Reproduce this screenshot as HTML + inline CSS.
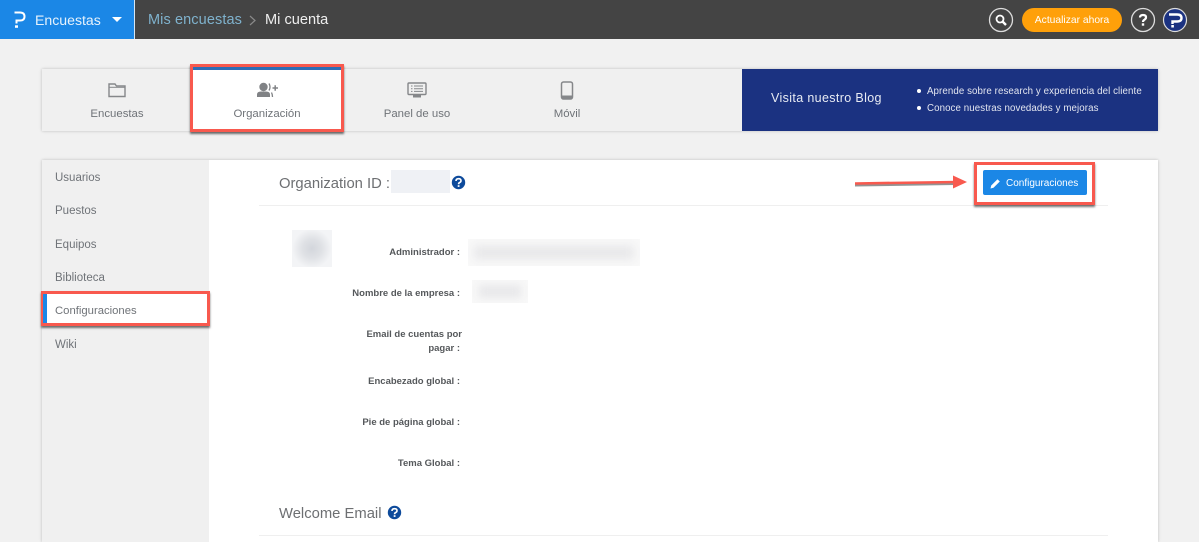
<!DOCTYPE html>
<html lang="es"><head><meta charset="utf-8"><title>Mi cuenta</title>
<style>
html,body{margin:0;padding:0;background:#f1f1f1;width:1199px;height:542px;overflow:hidden}
body{position:relative;font-family:"Liberation Sans",sans-serif}
div,span,svg{position:absolute;display:block;box-sizing:border-box}
.t{white-space:nowrap;line-height:16px}
.tab{color:#6f7378;font-size:11.400px;text-align:center;top:106px}
.side{color:#6f7378;font-size:11.500px;left:55px}
.lab{color:#55585b;font-size:9.500px;font-weight:bold;text-align:right;right:739px;line-height:16px;white-space:nowrap}
.red{border:3px solid #f8594e;box-shadow:0 2px 2px rgba(0,0,0,.55)}
.h{color:#6d6f72;font-size:14.800px}
</style></head><body>
<div style="left:0;top:0;width:1199px;height:39px;background:#444"></div>
<div style="left:0;top:0;width:134px;height:39px;background:#1b87e6"></div>
<div style="left:134px;top:0;width:1px;height:39px;background:#d5e6f5"></div>
<svg style="left:12px;top:10px" width="14" height="20" viewBox="0 0 14 20"><path d="M2.500 2.500H8Q12.500 2.500 12.500 6.500Q12.500 10.500 8 10.500H4.500V13.500" fill="none" stroke="#fff" stroke-width="2"/><rect x="3" y="15.300" width="3" height="2.500" fill="#fff"/></svg>
<div class="t" style="left:35px;top:12px;color:#e6f2fc;font-size:14.100px">Encuestas</div>
<svg style="left:112px;top:17px" width="10" height="6"><path d="M0 0H10L5 5Z" fill="#fff"/></svg>
<div class="t" style="left:148px;top:12px;color:#7fb2cd;font-size:14.500px;letter-spacing:.1px">Mis encuestas</div>
<svg style="left:249px;top:15px" width="8" height="11"><path d="M1 1L6 5.500L1 10" fill="none" stroke="#8a8a8a" stroke-width="1.200"/></svg>
<div class="t" style="left:265px;top:12px;color:#eee;font-size:14.600px">Mi cuenta</div>
<svg style="left:988px;top:7px" width="26" height="26" viewBox="0 0 26 26"><circle cx="13" cy="13" r="11.500" fill="none" stroke="#ddd" stroke-width="1.300"/><circle cx="12" cy="12" r="3.500" fill="none" stroke="#fff" stroke-width="1.800"/><path d="M14.500 14.500L18 18" stroke="#fff" stroke-width="2.400"/></svg>
<div class="t" style="left:1022px;top:8px;width:100px;height:24px;border-radius:12px;background:#ffa00a;color:#fff;font-size:10.300px;text-align:center;line-height:25px">Actualizar ahora</div>
<svg style="left:1130px;top:7px" width="26" height="26" viewBox="0 0 26 26"><circle cx="13" cy="13" r="11.500" fill="none" stroke="#ddd" stroke-width="1.300"/><path d="M10 10.500Q10 8 13 8Q16 8 16 10.300Q16 11.800 14.500 12.700Q13 13.500 13 15" fill="none" stroke="#fff" stroke-width="2.200"/><rect x="11.800" y="16.300" width="2.400" height="2.400" fill="#fff"/></svg>
<svg style="left:1162px;top:7px" width="26" height="26" viewBox="0 0 26 26"><circle cx="13" cy="13" r="11.500" fill="#1b3281" stroke="#ddd" stroke-width="1.200"/><path d="M7 7.500H15Q19.500 7.500 19.500 11Q19.500 14.500 15 14.500H10.500V17" fill="none" stroke="#fff" stroke-width="2.400"/><rect x="9.300" y="18" width="2.600" height="2.500" fill="#fff"/></svg>

<div style="left:42px;top:69px;width:1116px;height:62px;background:#f0f0f0;box-shadow:0 0 3px rgba(0,0,0,.22)"></div>
<div style="left:742px;top:69px;width:416px;height:62px;background:#1b3281"></div>

<svg style="left:108px;top:82px" width="18" height="16" viewBox="0 0 18 16"><path d="M1 14.500V2H7L8.500 4H17V14.500Z" fill="none" stroke="#85878a" stroke-width="1.400"/><path d="M1 5.300H17" stroke="#85878a"/></svg>
<div class="t tab" style="left:67px;width:100px">Encuestas</div>

<div style="left:190px;top:64px;width:154px;height:68px;background:#fff" class="red"></div>
<div style="left:193px;top:67px;width:148px;height:3px;background:#2f6db5"></div>
<svg style="left:256px;top:82px" width="22" height="16" viewBox="0 0 22 16"><circle cx="7.500" cy="5" r="4.200" fill="#808285"/><path d="M1 15V12.500Q1 9.500 5 9.500H10Q14 9.500 14 12.500V15Z" fill="#808285"/><path d="M13 1.500Q15 5 13 8.500M15.500 10.500Q16.500 12.500 16.500 15" stroke="#808285" stroke-width="1.300" fill="none"/><path d="M16.500 6H22M19.200 3.300V8.700" stroke="#808285" stroke-width="1.500"/></svg>
<div class="t tab" style="left:217px;width:100px">Organización</div>

<svg style="left:407px;top:82px" width="20" height="16" viewBox="0 0 20 16"><rect x="1" y="1" width="18" height="11.500" rx="1" fill="#f0f0f0" stroke="#85878a" stroke-width="1.400"/><path d="M4 4H5.500M7 4H16M4 6.700H5.500M7 6.700H16M4 9.400H5.500M7 9.400H16" stroke="#85878a"/><rect x="6" y="13" width="8" height="2.500" fill="#85878a"/></svg>
<div class="t tab" style="left:367px;width:100px">Panel de uso</div>

<svg style="left:560px;top:81px" width="14" height="19" viewBox="0 0 14 19"><rect x="1.500" y="1" width="11" height="17" rx="2" fill="none" stroke="#85878a" stroke-width="1.500"/><rect x="1.500" y="14.500" width="11" height="3.500" fill="#85878a"/></svg>
<div class="t tab" style="left:517px;width:100px">Móvil</div>

<div class="t" style="left:771px;top:90px;color:#e8ebf3;font-size:12.500px;letter-spacing:.36px">Visita nuestro Blog</div>
<div style="left:916.500px;top:89px;width:4px;height:4px;border-radius:50%;background:#fff"></div>
<div class="t" style="left:927px;top:84px;color:#e3e6f0;font-size:9.700px;letter-spacing:.1px">Aprende sobre research y experiencia del cliente</div>
<div style="left:916.500px;top:106px;width:4px;height:4px;border-radius:50%;background:#fff"></div>
<div class="t" style="left:927px;top:101px;color:#e3e6f0;font-size:9.700px;letter-spacing:.1px">Conoce nuestras novedades y mejoras</div>

<div style="left:42px;top:160px;width:1116px;height:382px;background:#fff;box-shadow:0 0 3px rgba(0,0,0,.22)"></div>
<div style="left:42px;top:160px;width:167px;height:382px;background:#f0f0f0"></div>
<div class="t side" style="top:170px">Usuarios</div>
<div class="t side" style="top:203px">Puestos</div>
<div class="t side" style="top:237px">Equipos</div>
<div class="t side" style="top:270px">Biblioteca</div>
<div class="red" style="left:41px;top:291px;width:169px;height:35px;background:#fff"></div>
<div style="left:43px;top:294px;width:4px;height:29px;background:#1b87e6"></div>
<div class="t side" style="top:303px;font-size:11.300px">Configuraciones</div>
<div class="t side" style="top:337px">Wiki</div>

<div class="t h" style="left:279px;top:176px">Organization ID :</div>
<div style="left:391px;top:170px;width:59px;height:23px;background:#eff1f5"></div>
<svg style="left:451px;top:175px" width="15" height="15" viewBox="0 0 15 15"><circle cx="7.500" cy="7.500" r="6.700" fill="#0d4a9b"/><path d="M5 6Q5 3.700 7.500 3.700Q10 3.700 10 5.700Q10 6.900 8.700 7.500Q7.600 8 7.600 9.200" fill="none" stroke="#fff" stroke-width="1.600"/><rect x="6.700" y="10.200" width="1.800" height="1.700" fill="#fff"/></svg>
<div style="left:259px;top:205px;width:849px;height:1px;background:#efefef"></div>

<svg style="left:855px;top:174px" width="114" height="16" viewBox="0 0 114 16"><path d="M0 11L100 9.500" stroke="#666" stroke-width="3" opacity=".7"/><path d="M0 9.500L102 8" stroke="#f8594e" stroke-width="2.600"/><path d="M98 1.500L112 8L98 14.500Z" fill="#f8594e"/></svg>
<div class="red" style="left:974px;top:162px;width:121px;height:43px;background:#fff"></div>
<div style="left:983px;top:170px;width:104px;height:25px;border-radius:2px;background:#1b87e6"></div>
<svg style="left:990px;top:178px" width="11" height="11" viewBox="0 0 11 11"><path d="M0.500 10.500L1.200 7.500L7.500 1.200L9.800 3.500L3.500 9.800Z" fill="#fff"/></svg>
<div class="t" style="left:1006px;top:176px;color:#fff;font-size:10px">Configuraciones</div>

<div style="left:292px;top:230px;width:40px;height:37px;background:radial-gradient(circle,#d3d6dc 0,#dfe1e5 35%,#f3f4f6 72%)"></div>
<div class="t lab" style="top:245px">Administrador :</div>
<div style="left:468px;top:239px;width:172px;height:27px;background:#f9f9f9;overflow:hidden"><div style="left:6px;top:7px;width:160px;height:13px;background:#e6e6e8;filter:blur(5px)"></div></div>
<div class="t lab" style="top:286px">Nombre de la empresa :</div>
<div style="left:472px;top:280px;width:56px;height:23px;background:#f8f8f8;overflow:hidden"><div style="left:7px;top:5px;width:42px;height:13px;background:#e8e8ea;filter:blur(4px)"></div></div>
<div class="t lab" style="top:327px;right:737px">Email de cuentas por</div>
<div class="t lab" style="top:341px">pagar :</div>
<div class="t lab" style="top:374px">Encabezado global :</div>
<div class="t lab" style="top:415px">Pie de página global :</div>
<div class="t lab" style="top:456px">Tema Global :</div>

<div class="t h" style="left:279px;top:506px">Welcome Email</div>
<svg style="left:387px;top:505px" width="15" height="15" viewBox="0 0 15 15"><circle cx="7.500" cy="7.500" r="6.700" fill="#0d4a9b"/><path d="M5 6Q5 3.700 7.500 3.700Q10 3.700 10 5.700Q10 6.900 8.700 7.500Q7.600 8 7.600 9.200" fill="none" stroke="#fff" stroke-width="1.600"/><rect x="6.700" y="10.200" width="1.800" height="1.700" fill="#fff"/></svg>
<div style="left:259px;top:535px;width:849px;height:1px;background:#efefef"></div>
</body></html>
